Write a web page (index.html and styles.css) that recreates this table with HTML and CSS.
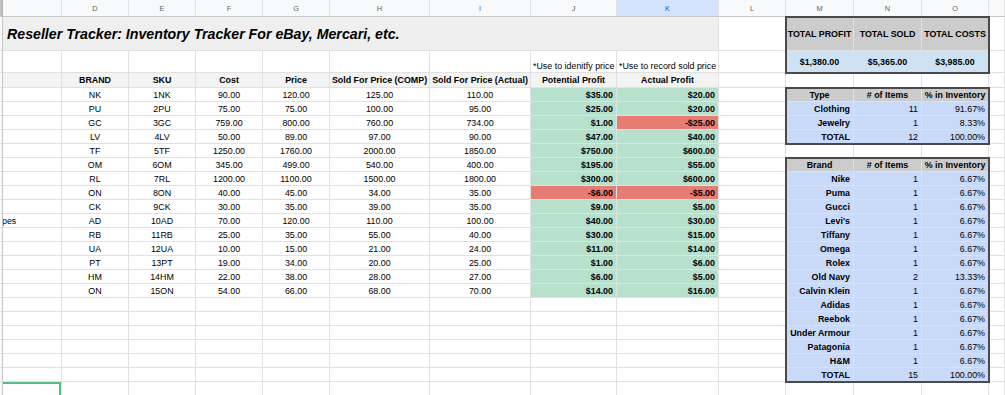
FILE: index.html
```html
<!DOCTYPE html>
<html>
<head>
<meta charset="utf-8">
<link rel="stylesheet" href="styles.css">
</head>
<body>
<div class="sheet">
  <!-- column headers -->
  <div class="ch corner"></div><div class="ch"></div>
  <div class="ch">D</div><div class="ch">E</div><div class="ch">F</div><div class="ch">G</div><div class="ch">H</div><div class="ch">I</div><div class="ch">J</div><div class="ch ch-sel">K</div><div class="ch">L</div><div class="ch">M</div><div class="ch">N</div><div class="ch">O</div><div class="ch"></div>

  <!-- total box (M-O, rows 2-3) -->
  <div class="box totals">
    <div class="c gray b ctr">TOTAL PROFIT</div><div class="c gray b ctr">TOTAL SOLD</div><div class="c gray b ctr">TOTAL COSTS</div>
    <div class="c lblue b ctr">$1,380.00</div><div class="c lblue b ctr">$5,365.00</div><div class="c lblue b ctr">$3,985.00</div>
  </div>

  <!-- type table (M-O, rows 5-8) -->
  <div class="box types">
    <div class="c gray b ctr">Type</div><div class="c gray b ctr"># of Items</div><div class="c gray b ctr">% in Inventory</div>
    <div class="c blue b rt">Clothing</div><div class="c blue rt">11</div><div class="c blue rt">91.67%</div>
    <div class="c blue b rt">Jewelry</div><div class="c blue rt">1</div><div class="c blue rt">8.33%</div>
    <div class="c blue b rt">TOTAL</div><div class="c blue rt">12</div><div class="c blue rt">100.00%</div>
  </div>

  <!-- brand table (M-O, rows 10-25) -->
  <div class="box brands">
    <div class="c gray b ctr">Brand</div><div class="c gray b ctr"># of Items</div><div class="c gray b ctr">% in Inventory</div>
    <div class="c blue b rt">Nike</div><div class="c blue rt">1</div><div class="c blue rt">6.67%</div>
    <div class="c blue b rt">Puma</div><div class="c blue rt">1</div><div class="c blue rt">6.67%</div>
    <div class="c blue b rt">Gucci</div><div class="c blue rt">1</div><div class="c blue rt">6.67%</div>
    <div class="c blue b rt">Levi's</div><div class="c blue rt">1</div><div class="c blue rt">6.67%</div>
    <div class="c blue b rt">Tiffany</div><div class="c blue rt">1</div><div class="c blue rt">6.67%</div>
    <div class="c blue b rt">Omega</div><div class="c blue rt">1</div><div class="c blue rt">6.67%</div>
    <div class="c blue b rt">Rolex</div><div class="c blue rt">1</div><div class="c blue rt">6.67%</div>
    <div class="c blue b rt">Old Navy</div><div class="c blue rt">2</div><div class="c blue rt">13.33%</div>
    <div class="c blue b rt">Calvin Klein</div><div class="c blue rt">1</div><div class="c blue rt">6.67%</div>
    <div class="c blue b rt">Adidas</div><div class="c blue rt">1</div><div class="c blue rt">6.67%</div>
    <div class="c blue b rt">Reebok</div><div class="c blue rt">1</div><div class="c blue rt">6.67%</div>
    <div class="c blue b rt">Under Armour</div><div class="c blue rt">1</div><div class="c blue rt">6.67%</div>
    <div class="c blue b rt">Patagonia</div><div class="c blue rt">1</div><div class="c blue rt">6.67%</div>
    <div class="c blue b rt">H&amp;M</div><div class="c blue rt">1</div><div class="c blue rt">6.67%</div>
    <div class="c blue b rt">TOTAL</div><div class="c blue rt">15</div><div class="c blue rt">100.00%</div>
  </div>

  <!-- row 2: title -->
  <div class="rh"></div>
  <div class="c title">Reseller Tracker: Inventory Tracker For eBay, Mercari, etc.</div>
  <div class="c"></div><div class="c"></div>

  <!-- row 3: notes -->
  <div class="rh"></div><div class="c"></div>
  <div class="c"></div><div class="c"></div><div class="c"></div><div class="c"></div><div class="c"></div><div class="c"></div>
  <div class="c note">*Use to idenitfy price</div><div class="c note">*Use to record sold price</div>
  <div class="c"></div><div class="c"></div>

  <!-- row 4: column titles -->
  <div class="rh"></div><div class="c hd"></div>
  <div class="c hd b ctr">BRAND</div><div class="c hd b ctr">SKU</div><div class="c hd b ctr">Cost</div><div class="c hd b ctr">Price</div><div class="c hd b ctr">Sold For Price (COMP)</div><div class="c hd b ctr">Sold For Price (Actual)</div><div class="c hd b ctr">Potential Profit</div><div class="c hd b ctr">Actual Profit</div>
  <div class="c"></div><div class="c"></div><div class="c"></div><div class="c"></div><div class="c"></div>

  <!-- data rows -->
  <div class="rh"></div><div class="c"></div>
  <div class="c ctr">NK</div><div class="c ctr">1NK</div><div class="c ctr">90.00</div><div class="c ctr">120.00</div><div class="c ctr">125.00</div><div class="c ctr">110.00</div><div class="c green b rt">$35.00</div><div class="c green b rt">$20.00</div>
  <div class="c"></div><div class="c"></div>

  <div class="rh"></div><div class="c"></div>
  <div class="c ctr">PU</div><div class="c ctr">2PU</div><div class="c ctr">75.00</div><div class="c ctr">75.00</div><div class="c ctr">100.00</div><div class="c ctr">95.00</div><div class="c green b rt">$25.00</div><div class="c green b rt">$20.00</div>
  <div class="c"></div><div class="c"></div>

  <div class="rh"></div><div class="c"></div>
  <div class="c ctr">GC</div><div class="c ctr">3GC</div><div class="c ctr">759.00</div><div class="c ctr">800.00</div><div class="c ctr">760.00</div><div class="c ctr">734.00</div><div class="c green b rt">$1.00</div><div class="c red b rt">-$25.00</div>
  <div class="c"></div><div class="c"></div>

  <div class="rh"></div><div class="c"></div>
  <div class="c ctr">LV</div><div class="c ctr">4LV</div><div class="c ctr">50.00</div><div class="c ctr">89.00</div><div class="c ctr">97.00</div><div class="c ctr">90.00</div><div class="c green b rt">$47.00</div><div class="c green b rt">$40.00</div>
  <div class="c"></div><div class="c"></div>

  <div class="rh"></div><div class="c"></div>
  <div class="c ctr">TF</div><div class="c ctr">5TF</div><div class="c ctr">1250.00</div><div class="c ctr">1760.00</div><div class="c ctr">2000.00</div><div class="c ctr">1850.00</div><div class="c green b rt">$750.00</div><div class="c green b rt">$600.00</div>
  <div class="c"></div><div class="c"></div><div class="c"></div><div class="c"></div><div class="c"></div>

  <div class="rh"></div><div class="c"></div>
  <div class="c ctr">OM</div><div class="c ctr">6OM</div><div class="c ctr">345.00</div><div class="c ctr">499.00</div><div class="c ctr">540.00</div><div class="c ctr">400.00</div><div class="c green b rt">$195.00</div><div class="c green b rt">$55.00</div>
  <div class="c"></div><div class="c"></div>

  <div class="rh"></div><div class="c"></div>
  <div class="c ctr">RL</div><div class="c ctr">7RL</div><div class="c ctr">1200.00</div><div class="c ctr">1100.00</div><div class="c ctr">1500.00</div><div class="c ctr">1800.00</div><div class="c green b rt">$300.00</div><div class="c green b rt">$600.00</div>
  <div class="c"></div><div class="c"></div>

  <div class="rh"></div><div class="c"></div>
  <div class="c ctr">ON</div><div class="c ctr">8ON</div><div class="c ctr">40.00</div><div class="c ctr">45.00</div><div class="c ctr">34.00</div><div class="c ctr">35.00</div><div class="c red b rt">-$6.00</div><div class="c red b rt">-$5.00</div>
  <div class="c"></div><div class="c"></div>

  <div class="rh"></div><div class="c"></div>
  <div class="c ctr">CK</div><div class="c ctr">9CK</div><div class="c ctr">30.00</div><div class="c ctr">35.00</div><div class="c ctr">39.00</div><div class="c ctr">35.00</div><div class="c green b rt">$9.00</div><div class="c green b rt">$5.00</div>
  <div class="c"></div><div class="c"></div>

  <div class="rh"></div><div class="c cut">pes</div>
  <div class="c ctr">AD</div><div class="c ctr">10AD</div><div class="c ctr">70.00</div><div class="c ctr">120.00</div><div class="c ctr">110.00</div><div class="c ctr">100.00</div><div class="c green b rt">$40.00</div><div class="c green b rt">$30.00</div>
  <div class="c"></div><div class="c"></div>

  <div class="rh"></div><div class="c"></div>
  <div class="c ctr">RB</div><div class="c ctr">11RB</div><div class="c ctr">25.00</div><div class="c ctr">35.00</div><div class="c ctr">55.00</div><div class="c ctr">40.00</div><div class="c green b rt">$30.00</div><div class="c green b rt">$15.00</div>
  <div class="c"></div><div class="c"></div>

  <div class="rh"></div><div class="c"></div>
  <div class="c ctr">UA</div><div class="c ctr">12UA</div><div class="c ctr">10.00</div><div class="c ctr">15.00</div><div class="c ctr">21.00</div><div class="c ctr">24.00</div><div class="c green b rt">$11.00</div><div class="c green b rt">$14.00</div>
  <div class="c"></div><div class="c"></div>

  <div class="rh"></div><div class="c"></div>
  <div class="c ctr">PT</div><div class="c ctr">13PT</div><div class="c ctr">19.00</div><div class="c ctr">34.00</div><div class="c ctr">20.00</div><div class="c ctr">25.00</div><div class="c green b rt">$1.00</div><div class="c green b rt">$6.00</div>
  <div class="c"></div><div class="c"></div>

  <div class="rh"></div><div class="c"></div>
  <div class="c ctr">HM</div><div class="c ctr">14HM</div><div class="c ctr">22.00</div><div class="c ctr">38.00</div><div class="c ctr">28.00</div><div class="c ctr">27.00</div><div class="c green b rt">$6.00</div><div class="c green b rt">$5.00</div>
  <div class="c"></div><div class="c"></div>

  <div class="rh"></div><div class="c"></div>
  <div class="c ctr">ON</div><div class="c ctr">15ON</div><div class="c ctr">54.00</div><div class="c ctr">66.00</div><div class="c ctr">68.00</div><div class="c ctr">70.00</div><div class="c green b rt">$14.00</div><div class="c green b rt">$16.00</div>
  <div class="c"></div><div class="c"></div>

  <!-- empty rows -->
  <div class="rh"></div><div class="c"></div><div class="c"></div><div class="c"></div><div class="c"></div><div class="c"></div><div class="c"></div><div class="c"></div><div class="c"></div><div class="c"></div><div class="c"></div><div class="c"></div>
  <div class="rh"></div><div class="c"></div><div class="c"></div><div class="c"></div><div class="c"></div><div class="c"></div><div class="c"></div><div class="c"></div><div class="c"></div><div class="c"></div><div class="c"></div><div class="c"></div>
  <div class="rh"></div><div class="c"></div><div class="c"></div><div class="c"></div><div class="c"></div><div class="c"></div><div class="c"></div><div class="c"></div><div class="c"></div><div class="c"></div><div class="c"></div><div class="c"></div>
  <div class="rh"></div><div class="c"></div><div class="c"></div><div class="c"></div><div class="c"></div><div class="c"></div><div class="c"></div><div class="c"></div><div class="c"></div><div class="c"></div><div class="c"></div><div class="c"></div>
  <div class="rh"></div><div class="c"></div><div class="c"></div><div class="c"></div><div class="c"></div><div class="c"></div><div class="c"></div><div class="c"></div><div class="c"></div><div class="c"></div><div class="c"></div><div class="c"></div>
  <div class="rh"></div><div class="c"></div><div class="c"></div><div class="c"></div><div class="c"></div><div class="c"></div><div class="c"></div><div class="c"></div><div class="c"></div><div class="c"></div><div class="c"></div><div class="c"></div>
  <div class="rh"></div><div class="c picked"></div><div class="c"></div><div class="c"></div><div class="c"></div><div class="c"></div><div class="c"></div><div class="c"></div><div class="c"></div><div class="c"></div><div class="c"></div><div class="c"></div><div class="c"></div><div class="c"></div><div class="c"></div>
</div>
</body>
</html>
```
FILE: styles.css
```css
html, body {
  margin: 0;
  padding: 0;
  background: #ffffff;
  overflow: hidden;
}

.sheet {
  display: grid;
  grid-template-columns: 3px 59px 67px 67px 67px 67px 100px 101px 86px 102px 67px 68px 68px 67px 16px;
  grid-template-rows: 17px 34px 22px 15px repeat(22, 14px);
  width: 1005px;
  height: 395px;
  overflow: hidden;
  font-family: "Liberation Sans", Arial, sans-serif;
  font-size: 8.9px;
  color: #000000;
}

.ch {
  box-sizing: border-box;
  background: #f8f9fa;
  border-right: 1px solid #e1e1e1;
  border-bottom: 1px solid #c4c7c5;
  display: flex;
  align-items: center;
  justify-content: center;
  font-size: 7.4px;
  color: #5f6368;
}

.corner {
  background: #c0c0c0;
  border-right: 1px solid #b0b0b0;
}

.ch-sel {
  background: #d3e3fd;
  color: #0b57d0;
}

.rh {
  box-sizing: border-box;
  background: #f8f9fa;
  border-right: 1px solid #c4c7c5;
  border-bottom: 1px solid #e1e1e1;
}

.c {
  box-sizing: border-box;
  border-right: 1px solid #e1e1e1;
  border-bottom: 1px solid #e1e1e1;
  display: flex;
  align-items: center;
  padding: 0 3px;
  white-space: nowrap;
  overflow: hidden;
  min-width: 0;
}

.ctr { justify-content: center; }
.rt { justify-content: flex-end; }
.b { font-weight: bold; }

.title {
  grid-column: span 9;
  background: #efefef;
  font-size: 14.2px;
  font-weight: bold;
  font-style: italic;
  padding-left: 4px;
}

.note {
  align-items: flex-end;
  padding-bottom: 1px;
  padding-left: 2px;
}

.hd { background: #f3f3f3; }
.green { background: #b7e1cd; }
.red { background: #e67c73; }
.gray { background: #cccccc; }
.lblue { background: #cfe2f3; }
.blue { background: #c9daf8; }

.cut {
  padding-left: 0;
  text-indent: -1px;
}

.picked {
  box-shadow: inset 0 2px 0 #57bb8a, inset -2px 0 0 #57bb8a;
}

.box {
  position: relative;
  z-index: 1;
  display: grid;
  grid-template-columns: 68px 68px 67px;
  outline: 2px solid #4a4a4a;
  outline-offset: -1px;
}

.totals {
  grid-column: 12 / 15;
  grid-row: 2 / 4;
  grid-template-rows: 34px 22px;
}

.types {
  grid-column: 12 / 15;
  grid-row: 5 / 9;
  grid-template-rows: repeat(4, 14px);
}

.brands {
  grid-column: 12 / 15;
  grid-row: 10 / 26;
  grid-template-rows: repeat(16, 14px);
}
```
